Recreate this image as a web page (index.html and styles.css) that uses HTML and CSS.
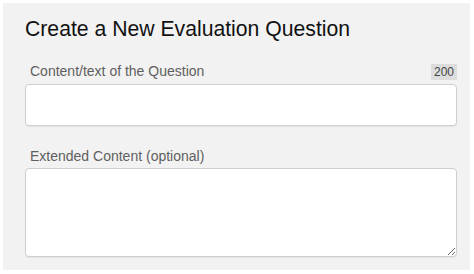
FILE: index.html
```html
<!DOCTYPE html>
<html>
<head>
<meta charset="utf-8">
<link rel="stylesheet" href="styles.css">
</head>
<body>
<div class="panel">
  <h1 class="title">Create a New Evaluation Question</h1>
  <div class="field">
    <div class="label-row">
      <label class="label">Content/text of the Question</label>
      <span class="badge">200</span>
    </div>
    <input class="input" type="text">
  </div>
  <div class="field field-ext">
    <div class="label-row">
      <label class="label">Extended Content (optional)</label>
    </div>
    <textarea class="textarea"></textarea>
  </div>
</div>
</body>
</html>
```

FILE: styles.css
```css
html, body {
  margin: 0;
  padding: 0;
  background: #ffffff;
}
body {
  font-family: "Liberation Sans", Arial, sans-serif;
  width: 474px;
  height: 274px;
  overflow: hidden;
}
.panel {
  margin: 3px;
  width: 467px;
  height: 267px;
  box-sizing: border-box;
  background: #f2f2f2;
  padding: 14px 13px 0 22px;
}
.title {
  margin: 0;
  font-size: 21.2px;
  line-height: 24px;
  font-weight: normal;
  color: #111;
  letter-spacing: 0;
}
.field {
  margin-top: 22px;
}
.field-ext {
  margin-top: 22px;
}
.label-row {
  display: flex;
  justify-content: space-between;
  align-items: center;
  padding-left: 5px;
  height: 17px;
}
.label {
  font-size: 14px;
  line-height: 17px;
  color: #5f5f5f;
}
.badge {
  font-size: 12px;
  line-height: 16px;
  padding: 0 3px;
  background: #dddddd;
  color: #444;
}
.input, .textarea {
  display: block;
  box-sizing: border-box;
  width: 100%;
  margin: 4px 0 0 0;
  border: 1px solid #cfcfcf;
  border-radius: 4px;
  background: #fff;
  box-shadow: 0 1px 1px rgba(0,0,0,0.06);
  font-family: inherit;
  outline: none;
}
.input {
  height: 42px;
}
.textarea {
  height: 89px;
  margin-top: 3px;
  resize: vertical;
}
```
